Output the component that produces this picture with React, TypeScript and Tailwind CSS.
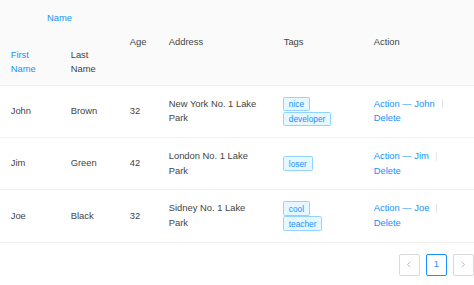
import React from 'react';

type Person = {
  key: string;
  first: string;
  last: string;
  age: number;
  address: string;
  tags: string[];
};

const people: Person[] = [
  { key: '1', first: 'John', last: 'Brown', age: 32, address: 'New York No. 1 Lake Park', tags: ['nice', 'developer'] },
  { key: '2', first: 'Jim', last: 'Green', age: 42, address: 'London No. 1 Lake Park', tags: ['loser'] },
  { key: '3', first: 'Joe', last: 'Black', age: 32, address: 'Sidney No. 1 Lake Park', tags: ['cool', 'teacher'] },
];

const Tag: React.FC<{ children: React.ReactNode }> = ({ children }) => (
  <span className="inline-flex h-[14.5px] items-center rounded-[1.5px] border border-[#91d5ff] bg-[#e6f7ff] px-[4.8px] text-[8.3px] leading-none text-[#1890ff]">
    {children}
  </span>
);

const PageButton: React.FC<{ active?: boolean; children: React.ReactNode }> = ({ active, children }) => (
  <div
    className={`flex h-[22px] w-[21.5px] items-center justify-center rounded-[2px] border text-[9.4px] ${
      active ? 'border-[#1890ff] font-medium text-[#1890ff]' : 'border-[#d9d9d9] text-[#bfbfbf]'
    }`}
  >
    {children}
  </div>
);

const Chevron: React.FC<{ dir: 'left' | 'right' }> = ({ dir }) => (
  <svg width="6" height="7" viewBox="0 0 6 7" fill="none">
    <path
      d={dir === 'left' ? 'M4 1L1.6 3.5L4 6' : 'M2 1L4.4 3.5L2 6'}
      stroke="currentColor"
      strokeWidth="1"
      strokeLinecap="round"
      strokeLinejoin="round"
    />
  </svg>
);

export default function App() {
  const th = 'px-[10.7px] text-left font-medium align-middle';
  const td = 'px-[10.7px] py-[11px] align-middle border-b border-[#f0f0f0]';

  return (
    <div className="w-[474px] bg-white font-['Liberation_Sans',Arial,sans-serif] text-[9.4px] leading-[14.7px] text-[#444]">
      <table className="w-full table-fixed border-collapse">
        <colgroup>
          <col className="w-[60px]" />
          <col className="w-[59px]" />
          <col className="w-[39px]" />
          <col className="w-[115px]" />
          <col className="w-[90px]" />
          <col className="w-[111px]" />
        </colgroup>
        <thead className="bg-[#fafafa] leading-[14px]">
          <tr className="h-[36px]">
            <th colSpan={2} className="px-[10.7px] text-center font-medium text-[#1890ff]">
              Name
            </th>
            <th rowSpan={2} className={`${th} border-b border-[#f0f0f0]`}>Age</th>
            <th rowSpan={2} className={`${th} border-b border-[#f0f0f0]`}>Address</th>
            <th rowSpan={2} className={`${th} border-b border-[#f0f0f0]`}>Tags</th>
            <th rowSpan={2} className={`${th} border-b border-[#f0f0f0]`}>Action</th>
          </tr>
          <tr className="h-[49px]">
            <th className={`${th} border-b border-[#f0f0f0] pt-[3px] text-[#1890ff]`}>First Name</th>
            <th className={`${th} border-b border-[#f0f0f0] pt-[3px]`}>Last Name</th>
          </tr>
        </thead>
        <tbody>
          {people.map((p) => (
            <tr key={p.key}>
              <td className={td}>{p.first}</td>
              <td className={td}>{p.last}</td>
              <td className={td}>{p.age}</td>
              <td className={td}>{p.address}</td>
              <td className={`${td} pl-[10px]`}>
                <div className="flex flex-wrap gap-x-[5.4px] gap-y-[0.5px]">
                  {p.tags.map((t) => (
                    <Tag key={t}>{t}</Tag>
                  ))}
                </div>
              </td>
              <td className={td}>
                <div className="flex flex-wrap items-center gap-x-[7px] text-[#1890ff]">
                  <span>Action — {p.first}</span>
                  <span className="h-[9px] w-px bg-[#e8e8e8]" />
                  <span>Delete</span>
                </div>
              </td>
            </tr>
          ))}
        </tbody>
      </table>

      <div className="mt-[10.7px] flex justify-end gap-[5.4px]">
        <PageButton>
          <Chevron dir="left" />
        </PageButton>
        <PageButton active>1</PageButton>
        <PageButton>
          <Chevron dir="right" />
        </PageButton>
      </div>
    </div>
  );
}
